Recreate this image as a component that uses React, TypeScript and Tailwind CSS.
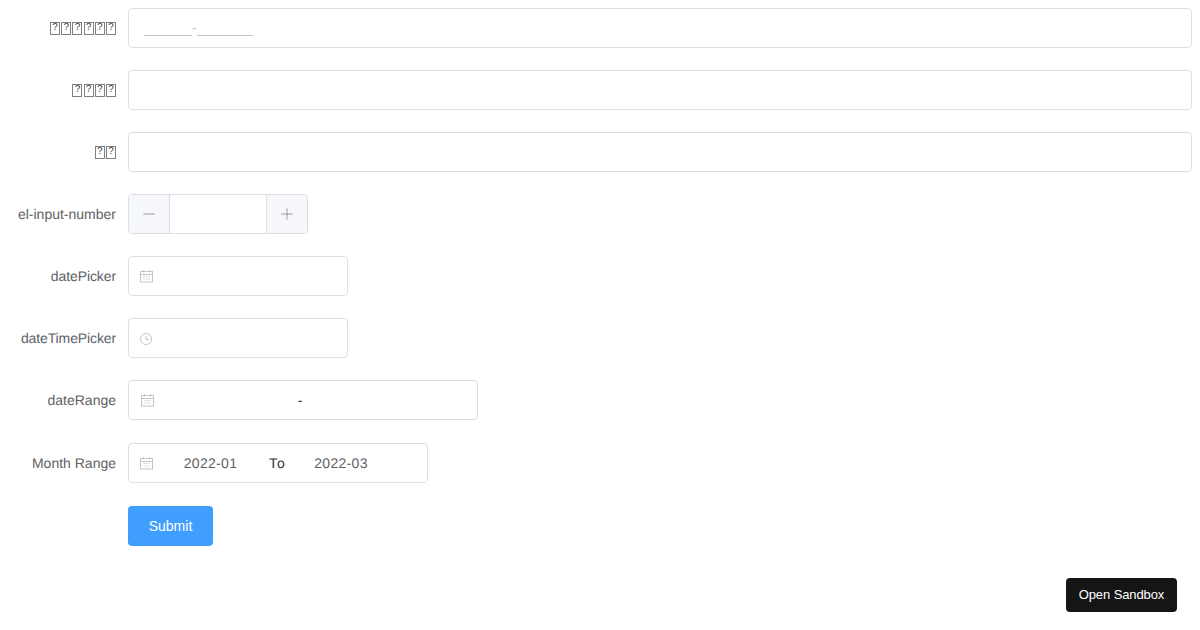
import { Minus, Plus } from 'lucide-react';
import type { ReactNode } from 'react';

function CalendarIcon() {
  return (
    <svg width="14" height="14" viewBox="0 0 14 14" fill="none" stroke="#c0c4cc" strokeWidth="1" className="shrink-0">
      <rect x="0.5" y="2.5" width="12" height="10.5" />
      <path d="M0.5 5.5h12M3.5 1v2.5M9.5 1v2.5" />
      <path d="M3.5 7.5h1.2M5.9 7.5h1.2M8.3 7.5h1.2M3.5 10h1.2M5.9 10h1.2M8.3 10h1.2" />
    </svg>
  );
}

function ClockIcon() {
  return (
    <svg width="14" height="14" viewBox="0 0 14 14" fill="none" stroke="#c0c4cc" strokeWidth="1" className="shrink-0">
      <circle cx="6" cy="8" r="5.5" />
      <path d="M6 5v3.5h3" />
    </svg>
  );
}

// missing-glyph box, the labels show no readable characters in the reference
function Tofu({ count }: { count: number }) {
  return (
    <span className="inline-flex -translate-y-px gap-[1.2px] align-middle">
      {Array.from({ length: count }, (_, i) => (
        <span
          key={i}
          className="flex h-[13px] w-[10px] items-center justify-center border-[1.5px] border-[#808080] text-[10px] leading-none text-[#444]"
        >
          ?
        </span>
      ))}
    </span>
  );
}

function Row({ label, children, className = 'mb-[22px]' }: { label: ReactNode; children: ReactNode; className?: string }) {
  return (
    <div className={`flex h-10 items-center ${className}`}>
      <label className="w-[120px] shrink-0 pr-3 text-right text-sm text-[#606266]">{label}</label>
      {children}
    </div>
  );
}

const box = 'h-10 rounded border border-[#dcdfe6] bg-white';

export default function App() {
  return (
    <div className="relative h-[630px] overflow-hidden bg-white p-2 font-['Liberation_Sans',sans-serif] [text-rendering:geometricPrecision]">
      <form>
        <Row label={<Tofu count={6} />}>
          <input
            placeholder="______-_______"
            className={`${box} flex-1 px-[15px] text-sm tracking-[0.2px] outline-none placeholder:text-[#c0c4cc]`}
          />
        </Row>
        <Row label={<Tofu count={4} />}>
          <input className={`${box} flex-1 px-[15px] text-sm outline-none`} />
        </Row>
        <Row label={<Tofu count={2} />}>
          <input className={`${box} flex-1 px-[15px] text-sm outline-none`} />
        </Row>
        <Row label="el-input-number">
          <div className={`${box} flex w-[180px] overflow-hidden text-[#606266]`}>
            <span className="flex w-[41px] items-center justify-center border-r border-[#dcdfe6] bg-[#f5f7fa]">
              <Minus size={18} strokeWidth={0.8} />
            </span>
            <span className="flex-1" />
            <span className="flex w-[41px] items-center justify-center border-l border-[#dcdfe6] bg-[#f5f7fa]">
              <Plus size={18} strokeWidth={0.8} />
            </span>
          </div>
        </Row>
        <Row label={<span className="tracking-[-0.1px]">datePicker</span>}>
          <div className={`${box} flex w-[220px] items-center pl-[11px]`}>
            <CalendarIcon />
          </div>
        </Row>
        <Row label={<span className="tracking-[-0.12px]">dateTimePicker</span>}>
          <div className={`${box} flex w-[220px] items-center pl-[11px]`}>
            <ClockIcon />
          </div>
        </Row>
        <Row label="dateRange" className="mb-[23px]">
          <div className={`${box} flex w-[350px] items-center pl-[12px] text-sm text-[#303133]`}>
            <CalendarIcon />
            <span className="w-[290px] text-center">-</span>
          </div>
        </Row>
        <Row label="Month Range" className="mb-[23px]">
          <div className={`${box} flex w-[300px] items-center pl-[11px] text-sm text-[#606266]`}>
            <CalendarIcon />
            <span className="ml-[10px] w-[93px] text-center tracking-[0.3px]">2022-01</span>
            <span className="w-[41px] text-center tracking-[1px] text-[#303133]">To</span>
            <span className="w-[86px] text-center tracking-[0.3px]">2022-03</span>
          </div>
        </Row>
        <div className="flex pl-[120px]">
          <button type="button" className="h-10 w-[85px] rounded bg-[#409eff] text-sm text-white">
            Submit
          </button>
        </div>
      </form>
      <button
        type="button"
        className="absolute left-[1066px] top-[578px] h-[34px] w-[111px] rounded bg-[#151515] text-[13px] tracking-[-0.1px] text-white"
      >
        Open Sandbox
      </button>
    </div>
  );
}
